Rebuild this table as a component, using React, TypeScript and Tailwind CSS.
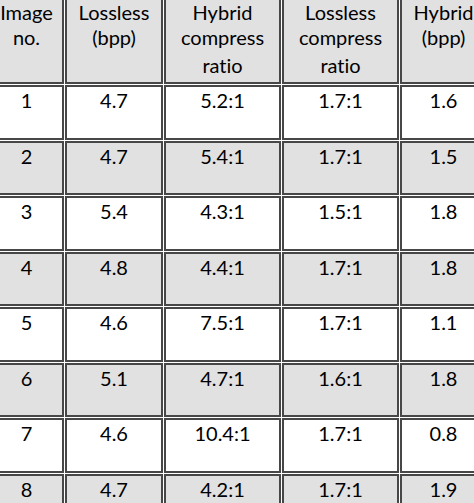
const header: string[][] = [
  ["Image", "no."],
  ["Lossless", "(bpp)"],
  ["Hybrid", "compress", "ratio"],
  ["Lossless", "compress", "ratio"],
  ["Hybrid", "(bpp)"],
];

const rows: string[][] = [
  ["1", "4.7", "5.2:1", "1.7:1", "1.6"],
  ["2", "4.7", "5.4:1", "1.7:1", "1.5"],
  ["3", "5.4", "4.3:1", "1.5:1", "1.8"],
  ["4", "4.8", "4.4:1", "1.7:1", "1.8"],
  ["5", "4.6", "7.5:1", "1.7:1", "1.1"],
  ["6", "5.1", "4.7:1", "1.6:1", "1.8"],
  ["7", "4.6", "10.4:1", "1.7:1", "0.8"],
  ["8", "4.7", "4.2:1", "1.7:1", "1.9"],
];

const App = () => {
  return (
    <div
      className="w-[474px] h-[503px] overflow-hidden bg-white text-black text-[20px] leading-[27.5px] [font-variant-ligatures:none]"
      style={{ fontFamily: "Lato, 'Open Sans', sans-serif" }}
    >
      <div className="grid w-[498px] grid-cols-[75px_98px_117px_117px_87px] grid-rows-[84px_55px_54px_55px_54px_55px_54px_55px_54px] gap-px bg-white ml-[-11px]">
        {header.map((lines, i) => (
          <div
            key={`h${i}`}
            className="border-2 border-t-0 border-[#474747] bg-[#e1e1e1] text-center"
          >
            {lines.map((l, j) => (
              <div
                key={j}
                className={`whitespace-nowrap ${j === 0 ? "leading-[24px]" : ""}`}
              >
                {l}
              </div>
            ))}
          </div>
        ))}
        {rows.map((row, r) =>
          row.map((cell, c) => (
            <div
              key={`${r}-${c}`}
              className={`border-2 border-[#474747] text-center ${
                r % 2 === 1 ? "bg-[#e1e1e1]" : "bg-white"
              }`}
            >
              {cell}
            </div>
          ))
        )}
      </div>
    </div>
  );
};

export default App;
